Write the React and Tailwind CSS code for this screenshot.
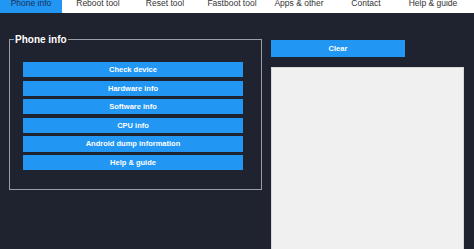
import React from 'react';

const tabs = ['Phone info', 'Reboot tool', 'Reset tool', 'Fastboot tool', 'Apps & other', 'Contact', 'Help & guide'];

const actions = ['Check device', 'Hardware info', 'Software info', 'CPU info', 'Android dump information', 'Help & guide'];

export default function App() {
  return (
    <div className="w-[474px] h-[249px] overflow-hidden bg-[#1f2330]" style={{ fontFamily: "'Liberation Sans', Arial, sans-serif" }}>
      {/* Tab bar */}
      <div className="h-[13px] bg-white overflow-hidden flex gap-[5px]">
        {tabs.map((t, i) => (
          <div
            key={t}
            className={`w-[62px] shrink-0 h-[13px] overflow-hidden ${i === 0 ? 'bg-[#2196f3] text-[#1b2f55]' : 'text-[#333]'}`}
          >
            <div className="h-[20px] -mt-[7px] flex items-center justify-center text-[8.5px] whitespace-nowrap">{t}</div>
          </div>
        ))}
      </div>

      {/* Content */}
      <div className="flex pl-[9px] pt-[20px] gap-[9px]">
        <fieldset className="w-[253px] h-[157px] border border-[#9a9ea6] pl-[13px] pr-[18px] pt-[16px]">
          <legend className="-ml-[9px] px-[1px] text-white font-bold text-[10px] leading-[13px]">Phone info</legend>
          <div className="flex flex-col gap-[3.3px]">
            {actions.map((a) => (
              <div key={a} className="h-[15.3px] bg-[#2196f3] text-white font-bold text-[7.5px] flex items-center justify-center">
                {a}
              </div>
            ))}
          </div>
        </fieldset>

        <div className="flex flex-col w-[193px] pt-[7px]">
          <div className="w-[134px] h-[17px] bg-[#2196f3] text-white font-bold text-[7.5px] flex items-center justify-center">Clear</div>
          <div className="mt-[10px] h-[200px] bg-[#f0f0f0] border border-[#d8d8d8]"></div>
        </div>
      </div>
    </div>
  );
}
